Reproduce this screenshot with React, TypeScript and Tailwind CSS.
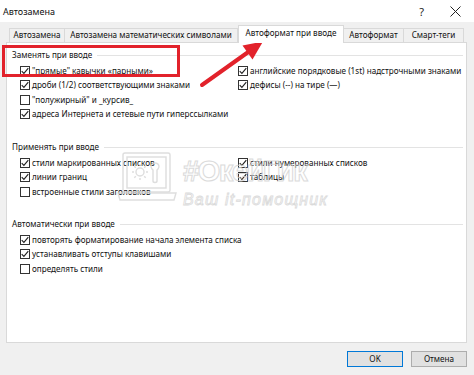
import React from "react";

function Box({ checked }: { checked: boolean }) {
  return (
    <span className="w-[10px] h-[10px] border border-[#333333] bg-white flex items-center justify-center shrink-0">
      {checked && (
        <svg width="8" height="8" viewBox="0 0 8 8">
          <path d="M0.7 4.1 L2.9 6.4 L7.3 1.1" stroke="#222222" strokeWidth="1.1" fill="none" />
        </svg>
      )}
    </span>
  );
}

function Row({ checked, label }: { checked: boolean; label: string }) {
  return (
    <div className="h-[14.5px] flex items-center gap-[2px] whitespace-nowrap">
      <Box checked={checked} />
      <span>{label}</span>
    </div>
  );
}

type Item = [boolean, string];

function Group({
  title,
  left,
  right,
  className,
}: {
  title: string;
  left: Item[];
  right: Item[];
  className?: string;
}) {
  return (
    <div className={className}>
      <div className="h-[14px] flex items-center pl-[5px] pr-[3px] gap-[5px]">
        <span className="whitespace-nowrap">{title}</span>
        <div className="flex-1 h-px bg-[#e3e3e3]" />
      </div>
      <div className="flex pl-[13px] mt-[1.5px]">
        <div className="w-[218px] flex flex-col">
          {left.map(([c, l]) => (
            <Row key={l} checked={c} label={l} />
          ))}
        </div>
        <div className="flex flex-col">
          {right.map(([c, l]) => (
            <Row key={l} checked={c} label={l} />
          ))}
        </div>
      </div>
    </div>
  );
}

function Tab({ label, w, selected, first }: { label: string; w: string; selected?: boolean; first?: boolean }) {
  if (selected) {
    return (
      <div
        className={`${w} h-[18px] mb-[-1px] relative z-10 bg-white border-l border-r border-t border-[#d9d9d9] flex items-center justify-center whitespace-nowrap pb-[2px]`}
      >
        {label}
      </div>
    );
  }
  return (
    <div
      className={`${w} h-[14px] bg-[#f0f0f0] border-t border-r border-[#d9d9d9] ${first ? "border-l" : ""} flex items-center justify-center whitespace-nowrap`}
    >
      {label}
    </div>
  );
}

export default function App() {
  return (
    <div className="relative w-[474px] h-[375px] overflow-hidden bg-[#f0f0f0] font-['Noto_Sans',sans-serif] text-[8.15px] text-[#111111] leading-none">
      {/* title bar */}
      <div className="h-[22px] bg-white flex items-center pl-[3px] pr-[13px]">
        <span className="text-[9px]">Автозамена</span>
        <span className="ml-auto mr-[26px] text-[11px] text-[#222222]">?</span>
        <svg width="11" height="11" viewBox="0 0 11 11">
          <path d="M0.5 0.5 L10.5 10.5 M10.5 0.5 L0.5 10.5" stroke="#222222" strokeWidth="1" />
        </svg>
      </div>

      {/* tabs */}
      <div className="h-[20px] flex items-end pl-[9px]">
        <Tab label="Автозамена" w="w-[56px]" first />
        <Tab label="Автозамена математических символами" w="w-[173px]" />
        <Tab label="Автоформат при вводе" w="w-[106px]" selected />
        <Tab label="Автоформат" w="w-[60px]" />
        <Tab label="Смарт-теги" w="w-[60px]" />
      </div>

      {/* panel */}
      <div className="ml-[6px] w-[461px] h-[301px] bg-white border border-[#d9d9d9] pt-[5px]">
        <Group
          title="Заменять при вводе"
          left={[
            [true, "\"прямые\" кавычки «парными»"],
            [true, "дроби (1/2) соответствующими знаками"],
            [false, "\"полужирный\" и _курсив_"],
            [true, "адреса Интернета и сетевые пути гиперссылками"],
          ]}
          right={[
            [true, "английские порядковые (1st) надстрочными знаками"],
            [true, "дефисы (--) на тире (—)"],
          ]}
        />
        <Group
          className="mt-[18.5px]"
          title="Применять при вводе"
          left={[
            [true, "стили маркированных списков"],
            [true, "линии границ"],
            [false, "встроенные стили заголовков"],
          ]}
          right={[
            [true, "стили нумерованных списков"],
            [true, "таблицы"],
          ]}
        />
        <Group
          className="mt-[18px]"
          title="Автоматически при вводе"
          left={[
            [true, "повторять форматирование начала элемента списка"],
            [true, "устанавливать отступы клавишами"],
            [false, "определять стили"],
          ]}
          right={[]}
        />
      </div>

      {/* buttons */}
      <div className="mt-[8px] flex justify-end pr-[7px] gap-[8px]">
        <div className="w-[56px] h-[16px] bg-[#e1e1e1] border border-[#0078d7] flex items-center justify-center">
          OK
        </div>
        <div className="w-[56px] h-[16px] bg-[#e1e1e1] border border-[#adadad] flex items-center justify-center">
          Отмена
        </div>
      </div>

      {/* watermark */}
      <div className="absolute left-[117px] top-[150px] flex items-start gap-[6px] pointer-events-none opacity-80">
        <svg width="60" height="54" viewBox="0 0 60 54" fill="none" stroke="#d6d6d6" strokeWidth="1.4">
          <rect x="6" y="3" width="47" height="39" rx="2" />
          <rect x="10" y="7" width="39" height="31" />
          <path d="M1 43 H59 L57 50 H3 Z" />
          <circle cx="23" cy="22" r="4" />
          <path d="M23 14 V16 M23 28 V30 M15 22 H17 M29 22 H31 M17.3 16.3 L18.8 17.8 M27.2 26.2 L28.7 27.7 M17.3 27.7 L18.8 26.2 M27.2 17.8 L28.7 16.3" />
          <path d="M38 13 C34 13 33 17 35 19 L36 20 V31 C36 33 40 33 40 31 V20 L41 19 C43 17 42 13 38 13 Z" />
        </svg>
        <div className="flex flex-col mt-[7px]">
          <span className="text-[29px] leading-none font-bold tracking-[-1.5px] text-transparent [-webkit-text-stroke:1px_#d2d2d2] font-['Liberation_Sans',sans-serif]">
            #ОкейГик
          </span>
          <span className="mt-[6px] text-[16px] leading-none italic tracking-[1.2px] text-transparent [-webkit-text-stroke:0.8px_#d2d2d2] font-['Liberation_Sans',sans-serif]">
            Ваш it-помощник
          </span>
        </div>
      </div>

      {/* red highlight box */}
      <div className="absolute left-[2px] top-[45px] w-[178px] h-[32px] border-[3px] border-[#e2222b] pointer-events-none" />

      {/* red arrow */}
      <svg className="absolute left-0 top-0 pointer-events-none" width="474" height="375" viewBox="0 0 474 375">
        <line x1="202" y1="85" x2="249" y2="51.5" stroke="#e2222b" strokeWidth="4" strokeLinecap="round" />
        <polygon points="263,41.5 242.5,45.5 252.5,59.5" fill="#e2222b" />
      </svg>
    </div>
  );
}
